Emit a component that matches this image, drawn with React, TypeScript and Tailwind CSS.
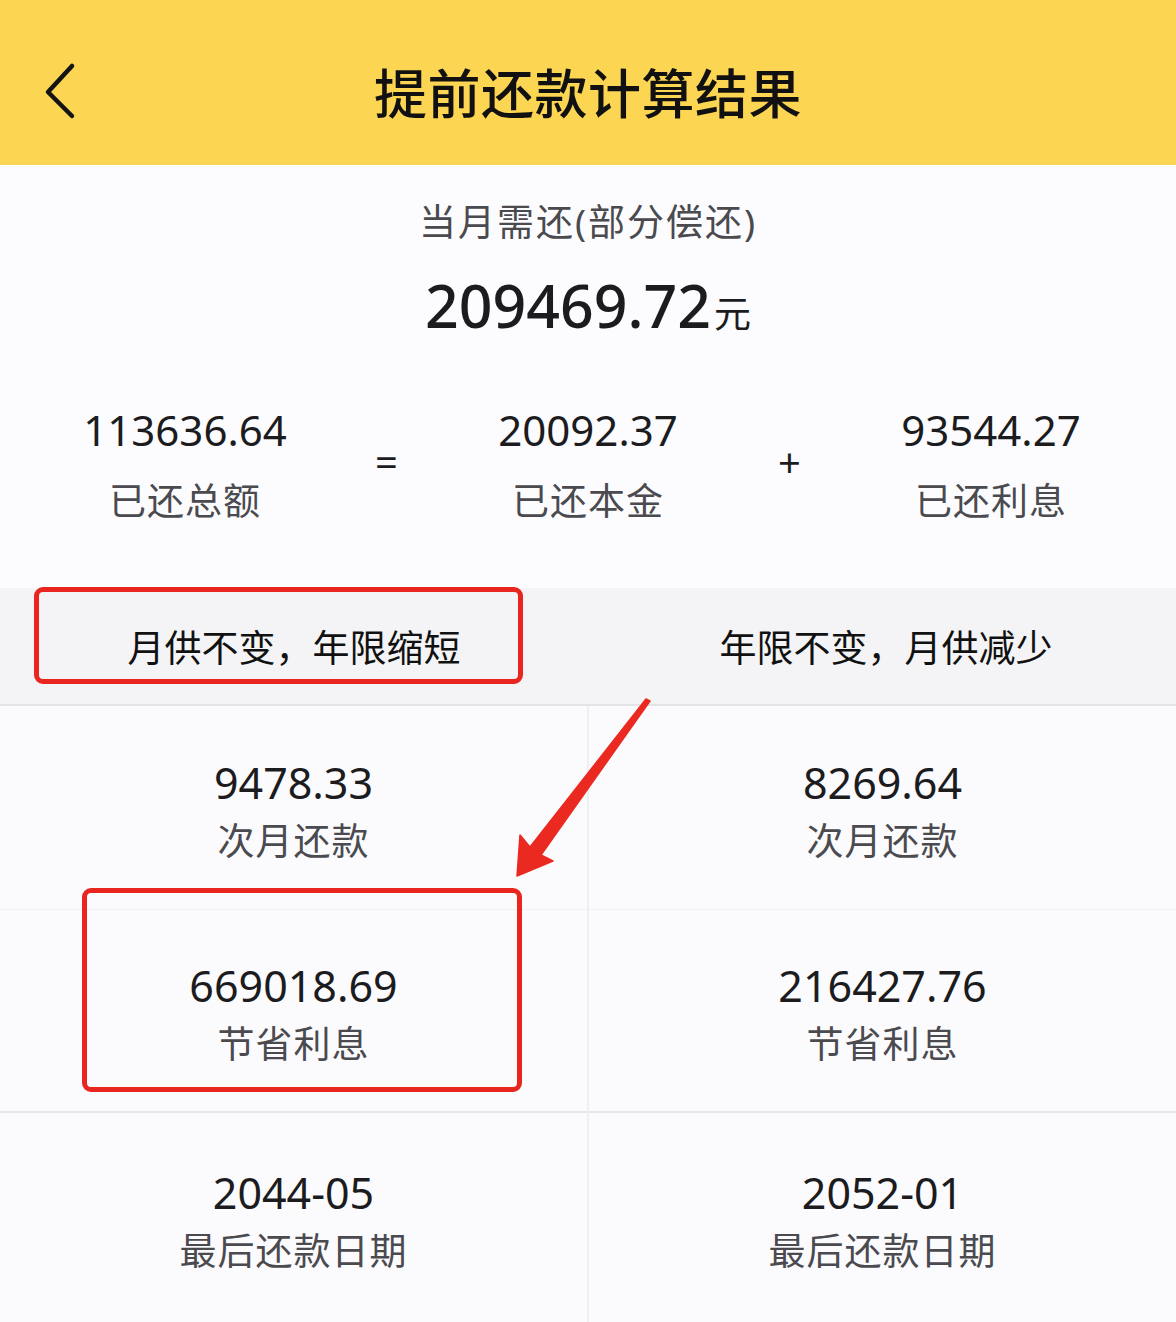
import type { ReactNode } from 'react';

const FONT = '"Noto Sans", "Noto Sans CJK SC", sans-serif';

interface Stat {
  value: string;
  label: string;
}

const shortenTerm: Stat[] = [
  { value: '9478.33', label: '次月还款' },
  { value: '669018.69', label: '节省利息' },
  { value: '2044-05', label: '最后还款日期' },
];

const reducePayment: Stat[] = [
  { value: '8269.64', label: '次月还款' },
  { value: '216427.76', label: '节省利息' },
  { value: '2052-01', label: '最后还款日期' },
];

function SumItem({ value, label }: Stat) {
  return (
    <div className="flex w-[300px] flex-col items-center">
      <span className="text-[42px] leading-[50px] text-[#1c1c1e]">{value}</span>
      <span className="mt-[24px] text-[37px] leading-[44px] tracking-[1px] text-[#4a4a4f]">{label}</span>
    </div>
  );
}

function Cell({ value, label, height, children }: Stat & { height: string; children?: ReactNode }) {
  return (
    <div className={`relative flex flex-col items-center justify-center bg-[#fbfbfd] pt-[5px] ${height}`}>
      <span className="text-[43px] leading-[52px] text-[#1c1c1e]">{value}</span>
      <span className="mt-[9px] text-[37px] leading-[46px] tracking-[1px] text-[#4a4a4f]">{label}</span>
      {children}
    </div>
  );
}

export default function App() {
  return (
    <div className="relative w-[1176px] h-[1322px] overflow-hidden bg-white" style={{ fontFamily: FONT }}>
      {/* header */}
      <header className="relative flex h-[165px] items-center justify-center bg-[#fcd552]">
        <svg className="absolute left-[40px] top-[62px]" width="40" height="58" viewBox="0 0 40 58" fill="none">
          <path d="M32 4 L8 30 L32 54" stroke="#141414" strokeWidth="4.5" strokeLinecap="round" strokeLinejoin="round" />
        </svg>
        <h1 className="mt-[22px] text-[53px] font-medium leading-[64px] tracking-[0.5px] text-[#111]">提前还款计算结果</h1>
      </header>

      {/* summary */}
      <section className="flex flex-col items-center bg-[#fcfcfe] pt-[35px] pb-[65px]">
        <p className="text-[37px] leading-[44px] tracking-[2px] text-[#4a4a4f]">当月需还(部分偿还)</p>
        <p className="mt-[27px] flex items-baseline leading-[68px] text-[#1c1c1e]">
          <span className="text-[59px] font-medium">209469.72</span>
          <span className="ml-[3px] text-[37px]">元</span>
        </p>
        <div className="mt-[57px] flex w-full items-start justify-between px-[35px]">
          <SumItem value="113636.64" label="已还总额" />
          <span className="mt-[32px] text-[40px] leading-[50px] text-[#1c1c1e]">=</span>
          <SumItem value="20092.37" label="已还本金" />
          <span className="mt-[32px] text-[40px] leading-[50px] text-[#1c1c1e]">+</span>
          <SumItem value="93544.27" label="已还利息" />
        </div>
      </section>

      {/* tabs */}
      <div className="relative grid h-[118px] grid-cols-2 border-b-2 border-[#e4e4e8] bg-[#f4f4f6]">
        <div className="flex items-center justify-center pt-[4px] text-[37px] leading-[46px] text-[#111]">
          月供不变，年限缩短
        </div>
        <div className="flex items-center justify-center pt-[4px] pl-[8px] text-[37px] leading-[46px] text-[#111]">
          年限不变，月供减少
        </div>
        <div className="absolute left-[34px] top-[-1px] h-[97px] w-[489px] rounded-[9px] border-[5px] border-[#e8251f]" />
      </div>

      {/* results */}
      <div className="grid grid-cols-2 gap-x-[2px] bg-[#efeff2]">
        <div className="flex flex-col">
          <Cell {...shortenTerm[0]} height="h-[203px]" />
          <Cell {...shortenTerm[1]} height="h-[202px] border-t border-[#f1f1f4]">
            <div className="absolute left-[82px] top-[-22px] h-[204px] w-[440px] rounded-[9px] border-[5px] border-[#e8251f]" />
          </Cell>
          <Cell {...shortenTerm[2]} height="h-[211px] border-t-2 border-[#e6e6ea]" />
        </div>
        <div className="flex flex-col">
          <Cell {...reducePayment[0]} height="h-[203px]" />
          <Cell {...reducePayment[1]} height="h-[202px] border-t border-[#f1f1f4]" />
          <Cell {...reducePayment[2]} height="h-[211px] border-t-2 border-[#e6e6ea]" />
        </div>
      </div>

      {/* arrow */}
      <svg className="absolute left-0 top-0 pointer-events-none" width="1176" height="1322" viewBox="0 0 1176 1322">
        <path
          d="M646 699 L650 701 L541 855 L553 861 L517 876 L520 835 L530 847 Z"
          fill="#ea2a20"
          stroke="#ea2a20"
          strokeWidth="1.5"
          strokeLinejoin="round"
        />
      </svg>
    </div>
  );
}
